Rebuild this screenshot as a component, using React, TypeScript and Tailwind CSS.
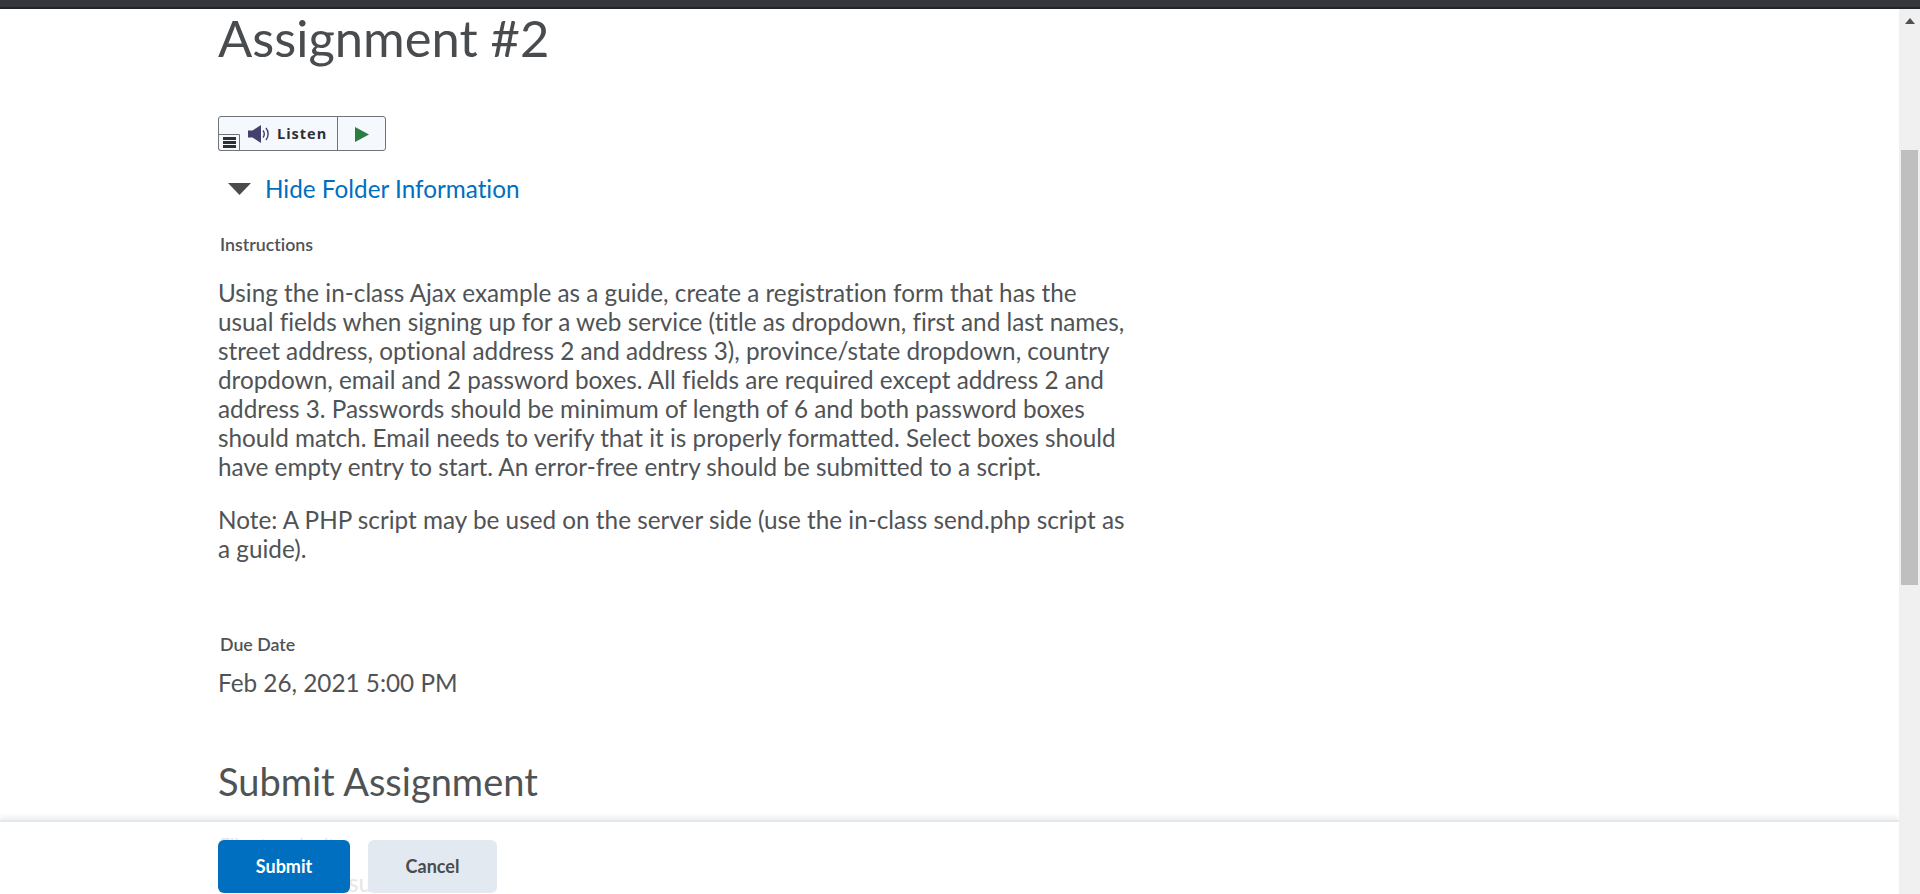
export default function App() {
  return (
    <div className="relative flex h-[894px] w-full flex-col overflow-hidden bg-white font-['Lato','Noto_Sans',sans-serif] text-[#505356] [font-variant-ligatures:none]">
      <div className="h-[9px] shrink-0 border-b-2 border-[#232428] bg-[#36373c]" />
      <div className="flex min-h-0 flex-1">
        <main className="relative min-w-0 flex-1 overflow-hidden">
          <div className="pl-[218px]">
            <h1 className="text-[50.7px] leading-[58px] font-normal text-[#494c4e]">Assignment #2</h1>
            <div className="relative mt-[49px] flex h-[35px] w-[168px] items-stretch rounded-[3px] border border-[#6e7477] bg-[#f5f8fc] font-['Open_Sans',sans-serif]">
              <div className="flex w-[119px] items-center border-r border-[#6e7477] pl-[29px]">
                <svg width="23" height="18" viewBox="0 0 23 18" className="shrink-0">
                  <path d="M0 5.500h4.500L13 0v18l-8.500-5.500H0z" fill="#43426e" />
                  <path d="M15 5.500c1.500 2 1.500 5 0 7" fill="none" stroke="#43426e" strokeWidth="1.400" />
                  <path d="M18 3c2.800 3.500 2.800 8.500 0 12" fill="none" stroke="#43426e" strokeWidth="1.400" />
                </svg>
                <span className="ml-[6px] text-[14.5px] font-bold tracking-[1px] text-[#2e3033]">Listen</span>
              </div>
              <div className="flex flex-1 items-center justify-center pt-[1px]">
                <svg width="14" height="15" viewBox="0 0 14 15"><path d="M0 0l14 7.500L0 15z" fill="#2a7d43" /></svg>
              </div>
              <div className="absolute bottom-[-1px] left-[-1px] flex h-[17px] w-[22px] flex-col items-center justify-center gap-[1px] rounded-bl-[3px] border border-[#6e7477] bg-[#f5f8fc]">
                <span className="h-[3px] w-[13px] bg-[#2e3033]" />
                <span className="h-[3px] w-[13px] bg-[#2e3033]" />
                <span className="h-[3px] w-[13px] bg-[#2e3033]" />
              </div>
            </div>
            <div className="mt-[23px] flex items-center pl-[10px]">
              <svg width="23" height="12" viewBox="0 0 23 12"><path d="M0 0h23L11.500 12z" fill="#494c4e" /></svg>
              <a className="ml-[14px] text-[24.3px] leading-[30px] text-[#006fbf]">Hide Folder Information</a>
            </div>
            <div className="mt-[29px] pl-[2px] text-[17.8px] font-semibold leading-[22px]">Instructions</div>
            <p className="mt-[23px] w-[912px] text-[24.3px] leading-[29px]">
              Using the in-class Ajax example as a guide, create a registration form that has the usual fields when signing up for a web service (title as dropdown, first and last names, street address, optional address 2 and address 3), province/state dropdown, country dropdown, email and 2 password boxes. All fields are required except address 2 and address 3. Passwords should be minimum of length of 6 and both password boxes should match. Email needs to verify that it is properly formatted. Select boxes should have empty entry to start. An error-free entry should be submitted to a script.
            </p>
            <p className="mt-[24px] w-[912px] text-[24.3px] leading-[29px]">
              Note: A PHP script may be used on the server side (use the in-class send.php script as a guide).
            </p>
            <div className="mt-[70px] pl-[2px] text-[17.8px] font-semibold leading-[22px]">Due Date</div>
            <div className="mt-[13px] text-[24.3px] leading-[29px]">Feb 26, 2021 5:00 PM</div>
            <h2 className="mt-[61px] text-[38px] leading-[46px] font-normal">Submit Assignment</h2>
            <div className="mt-[29px] pl-[2px] text-[17.8px] font-semibold leading-[22px]">Files to submit</div>
            <div className="mt-[13px] pl-[130px] text-[24.3px] leading-[29px]">su</div>
          </div>
          <div className="absolute inset-x-0 bottom-0 flex h-[74px] items-start gap-[18px] border-t-2 border-[#e3e9f1] bg-white/85 pl-[218px] pt-[18px] shadow-[0_-3px_5px_rgba(0,0,0,0.07)]">
            <button className="h-[53px] w-[132px] rounded-[6px] bg-[#006fbf] text-[18px] font-bold text-white">Submit</button>
            <button className="h-[53px] w-[129px] rounded-[6px] bg-[#e3e9f1] text-[18px] font-bold text-[#494c4e]">Cancel</button>
          </div>
        </main>
        <div className="flex w-[21px] shrink-0 flex-col items-center bg-[#f0f0f0]">
          <svg width="10" height="6" viewBox="0 0 10 6" className="mt-[9px]"><path d="M5 0l5 6H0z" fill="#505050" /></svg>
          <div className="mt-[126px] h-[435px] w-[17px] bg-[#bfbfbf]" />
        </div>
      </div>
    </div>
  );
}
